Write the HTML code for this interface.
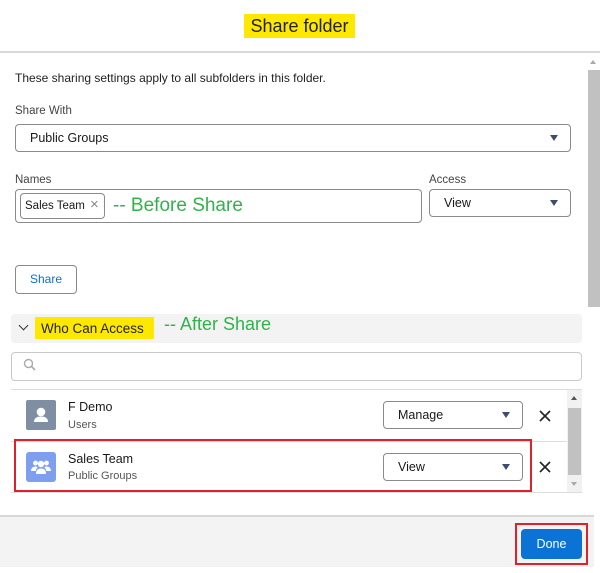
<!DOCTYPE html>
<html><head><meta charset="utf-8"><style>
*{margin:0;padding:0;box-sizing:border-box}
body{width:600px;height:573px;position:relative;background:#fff;font-family:"Liberation Sans",sans-serif;color:#181818;overflow:hidden}
.a{position:absolute}
.sel{position:absolute;border:1px solid #8a8a8a;border-radius:4px;background:#fff;font-size:12.5px;padding-left:14px;display:flex;align-items:center}
.tri{position:absolute;right:12px;top:50%;margin-top:-3px;width:0;height:0;border-left:4.5px solid transparent;border-right:4.5px solid transparent;border-top:6px solid #3e4d6e}
.lbl{position:absolute;font-size:11.5px;color:#444}
.g{color:#2fb34a;font-size:19px}
</style></head><body>
<div class="a" style="left:244px;top:14px;width:111px;height:24px;background:#ffe800"></div>
<div class="a" style="left:244px;top:14px;width:111px;height:24px;font-size:18px;line-height:25px;text-align:center;color:#222">Share folder</div>
<div class="a" style="left:0;top:51px;width:600px;height:2px;background:#d8d8d8"></div>
<div class="a" style="left:588px;top:53px;width:12px;height:463px;background:#fff"></div>
<div class="a" style="left:590px;top:60px;width:0;height:0;border-left:3px solid transparent;border-right:3px solid transparent;border-bottom:4px solid #aaa"></div>
<div class="a" style="left:588px;top:70px;width:12px;height:237px;background:#c1c1c1"></div>

<div class="a" style="left:15px;top:71px;font-size:12px;color:#222">These sharing settings apply to all subfolders in this folder.</div>
<div class="lbl" style="left:15px;top:105px">Share With</div>
<div class="sel" style="left:15px;top:124px;width:556px;height:28px">Public Groups<div class="tri"></div></div>
<div class="lbl" style="left:15px;top:174px">Names</div>
<div class="a" style="left:15px;top:189px;width:407px;height:34px;border:1px solid #8a8a8a;border-radius:4px"></div>
<div class="a" style="left:20px;top:193px;width:85px;height:26px;border:1px solid #8a8a8a;border-radius:4px;font-size:11.5px;line-height:24px;padding-left:4px">Sales Team <span style="color:#888;font-size:15px;position:absolute;left:69px;top:-1px">×</span></div>
<div class="a g" style="left:113px;top:195px">-- Before Share</div>
<div class="lbl" style="left:429px;top:174px">Access</div>
<div class="sel" style="left:429px;top:189px;width:142px;height:28px">View<div class="tri"></div></div>
<div class="a" style="left:15px;top:265px;width:62px;height:29px;border:1px solid #8a8a8a;border-radius:4px;color:#0b6fd3;font-size:12px;line-height:27px;text-align:center">Share</div>

<div class="a" style="left:11px;top:314px;width:571px;height:29px;background:#f3f3f3;border-radius:4px"></div>
<div class="a" style="left:20px;top:322px;width:7px;height:7px;border-right:1.6px solid #333;border-bottom:1.6px solid #333;transform:rotate(45deg)"></div>
<div class="a" style="left:35px;top:317px;width:119px;height:22px;background:#ffe800;font-size:13.5px;line-height:24px;padding-left:6px;color:#222">Who Can Access</div>
<div class="a g" style="left:164px;top:314px;font-size:18px">-- After Share</div>
<div class="a" style="left:11px;top:352px;width:571px;height:29px;border:1px solid #c9c9c9;border-radius:4px"></div>
<svg class="a" style="left:23px;top:358px" width="14" height="14" viewBox="0 0 14 14"><circle cx="5.5" cy="5.5" r="4" fill="none" stroke="#aaa" stroke-width="1.4"/><path d="M8.5 8.5L12 12" stroke="#aaa" stroke-width="1.6"/></svg>

<div class="a" style="left:11px;top:389px;width:571px;height:1px;background:#ddd"></div>
<div class="a" style="left:11px;top:441px;width:571px;height:1px;background:#ddd"></div>
<div class="a" style="left:11px;top:492px;width:571px;height:1px;background:#ddd"></div>
<div class="a" style="left:567px;top:390px;width:15px;height:102px;background:#f1f1f1"></div>
<div class="a" style="left:571px;top:396px;width:0;height:0;border-left:3.5px solid transparent;border-right:3.5px solid transparent;border-bottom:4px solid #555"></div>
<div class="a" style="left:568px;top:408px;width:13px;height:67px;background:#c1c1c1"></div>
<div class="a" style="left:571px;top:482px;width:0;height:0;border-left:3.5px solid transparent;border-right:3.5px solid transparent;border-top:4px solid #aaa"></div>

<div class="a" style="left:26px;top:400px;width:30px;height:30px;background:#7f8ea3;border-radius:2px"></div>
<svg class="a" style="left:26px;top:400px" width="30" height="30" viewBox="0 0 30 30"><circle cx="15" cy="12" r="4.3" fill="#fff"/><path d="M8 22c0-4 3-5.5 7-5.5s7 1.5 7 5.5z" fill="#fff"/></svg>
<div class="a" style="left:68px;top:400px;font-size:12.5px">F Demo</div>
<div class="a" style="left:68px;top:419px;font-size:11px;color:#555">Users</div>
<div class="sel" style="left:383px;top:401px;width:140px;height:28px">Manage<div class="tri"></div></div>
<svg class="a" style="left:539px;top:410px" width="12" height="12" viewBox="0 0 12 12"><path d="M1 1L11 11M11 1L1 11" stroke="#222" stroke-width="1.6"/></svg>

<div class="a" style="left:26px;top:452px;width:30px;height:30px;background:#7e9ff0;border-radius:3px"></div>
<svg class="a" style="left:26px;top:452px" width="30" height="30" viewBox="0 0 30 30" fill="#fff"><circle cx="15" cy="12" r="3.2"/><circle cx="9.5" cy="11" r="2.4"/><circle cx="20.5" cy="11" r="2.4"/><path d="M10 22c0-4 2-5.5 5-5.5s5 1.5 5 5.5z"/><path d="M5 19c0-3 2-4.5 4.5-4.5 1 0 1.8.3 2.3.7-1.300 1-2 2.3-2 3.8z"/><path d="M25 19c0-3-2-4.5-4.5-4.5-1 0-1.8.3-2.3.7 1.3 1 2 2.3 2 3.8z"/></svg>
<div class="a" style="left:68px;top:452px;font-size:12.5px">Sales Team</div>
<div class="a" style="left:68px;top:470px;font-size:11px;color:#555">Public Groups</div>
<div class="sel" style="left:383px;top:453px;width:140px;height:28px">View<div class="tri"></div></div>
<svg class="a" style="left:539px;top:461px" width="12" height="12" viewBox="0 0 12 12"><path d="M1 1L11 11M11 1L1 11" stroke="#222" stroke-width="1.6"/></svg>
<div class="a" style="left:14px;top:439px;width:518px;height:53px;border:2px solid #e0202a"></div>

<div class="a" style="left:0;top:515px;width:594px;height:52px;background:#f3f3f3;border-top:2px solid #d8d8d8"></div>
<div class="a" style="left:515px;top:523px;width:73px;height:42px;border:2px solid #e0202a"></div>
<div class="a" style="left:521px;top:529px;width:61px;height:30px;background:#0b73d6;border-radius:4px;color:#fff;font-size:12.5px;line-height:30px;text-align:center">Done</div>
</body></html>
